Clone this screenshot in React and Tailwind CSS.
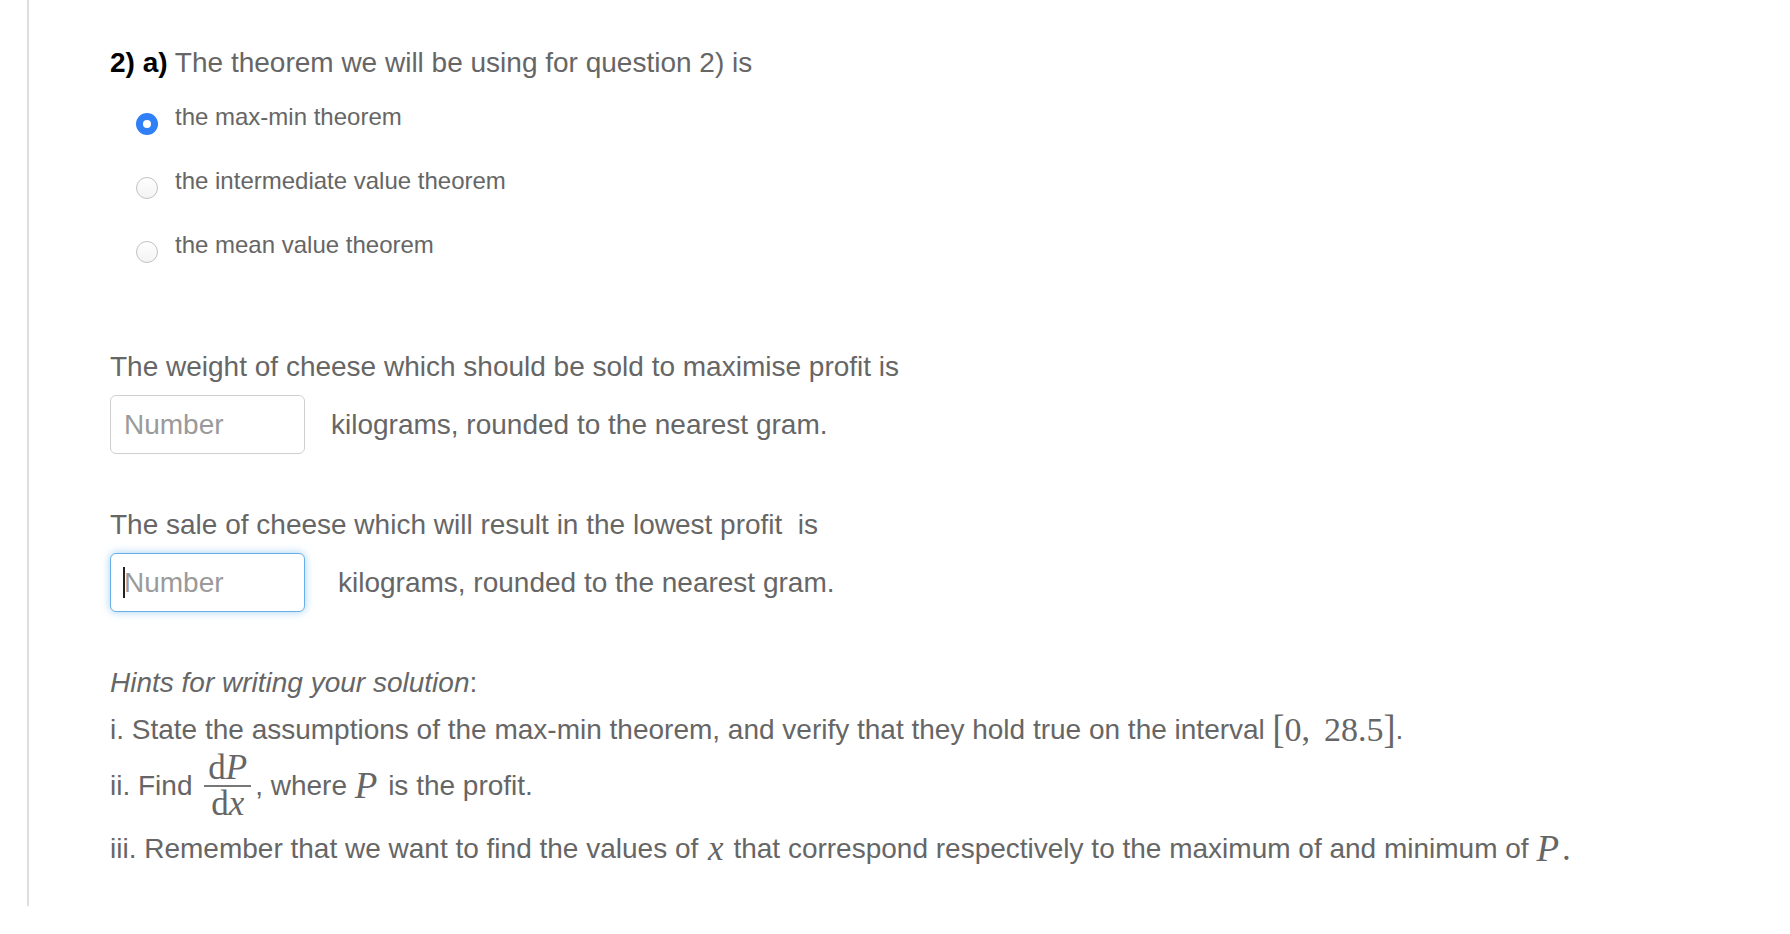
import React from "react";

const sans = { fontFamily: '"Liberation Sans", Arial, Helvetica, sans-serif' };

function Radio({ checked }) {
  if (checked) {
    return (
      <span className="mt-[14px] flex h-[22px] w-[22px] shrink-0 items-center justify-center rounded-full bg-[#2f7ff6]">
        <span className="h-[8px] w-[8px] rounded-full bg-white" />
      </span>
    );
  }
  return (
    <span className="mt-[14px] h-[22px] w-[22px] shrink-0 rounded-full border border-[#c2c2c2] bg-gradient-to-b from-white to-[#f3f3f3]" />
  );
}

function Option({ checked, label }) {
  return (
    <div className="flex h-[64px] items-center pl-[26px]">
      <Radio checked={checked} />
      <span className="ml-[17px] text-[24px] leading-[30px] text-[#666]">{label}</span>
    </div>
  );
}

function NumberBox({ focused }) {
  return (
    <div
      className={
        "relative flex h-[59px] w-[195px] shrink-0 items-center rounded-[6px] bg-white pl-[13px] " +
        (focused
          ? "border-[1.5px] border-[#66afe9] shadow-[0_0_8px_rgba(102,175,233,0.6)]"
          : "border-[1.5px] border-[#cfcfcf]")
      }
    >
      <span className="text-[28px] leading-[32px] text-[#9a9a9a]">Number</span>
      {focused && <span className="absolute left-[12px] top-[13px] h-[31px] w-[2px] bg-[#222]" />}
    </div>
  );
}

const serif = { fontFamily: '"Liberation Serif", "Times New Roman", serif' };

function M({ children, italic, cls }) {
  return (
    <span style={serif} className={"text-[35px] " + (italic ? "italic " : "") + (cls || "")}>
      {children}
    </span>
  );
}

export default function App() {
  return (
    <div style={sans} className="h-[934px] w-full bg-white text-[#666]">
      <div className="ml-[27px] h-[906px] border-l-2 border-[#dedede] pl-[81px] pt-[43px]">
        <div className="text-[28px] leading-[40px]">
          <span className="font-bold text-black">2) a)</span> The theorem we will be using for question 2) is
        </div>

        <div className="mt-[2px]">
          <Option checked label="the max-min theorem" />
          <Option label="the intermediate value theorem" />
          <Option label="the mean value theorem" />
        </div>

        <div className="mt-[70px] text-[28px] leading-[40px]">
          The weight of cheese which should be sold to maximise profit is
        </div>
        <div className="mt-[8px] flex items-center">
          <NumberBox />
          <span className="ml-[26px] text-[28px] leading-[40px]">kilograms, rounded to the nearest gram.</span>
        </div>

        <div className="mt-[51px] text-[28px] leading-[40px]">
          The sale of cheese which will result in the lowest profit&nbsp; is
        </div>
        <div className="mt-[8px] flex items-center">
          <NumberBox focused />
          <span className="ml-[33px] text-[28px] leading-[40px]">kilograms, rounded to the nearest gram.</span>
        </div>

        <div className="mt-[51px] text-[28px] leading-[40px]">
          <span className="italic">Hints for writing your solution</span>:
        </div>
        <div className="mt-[7px] flex items-center text-[28px] leading-[40px]">
          <span className="whitespace-pre">i. State the assumptions of the max-min theorem, and verify that they hold true on the interval </span>
          <span style={serif} className="flex items-center text-[34px] leading-[40px]">
            <span className="inline-block scale-y-[1.12] text-[36px]">[</span>
            <span>0,</span>
            <span className="ml-[14px]">28.5</span>
            <span className="inline-block scale-y-[1.12] text-[36px]">]</span>
          </span>
          <span>.</span>
        </div>

        <div className="flex h-[72px] items-center text-[28px]">
          <span className="whitespace-pre">ii. Find </span>
          <span style={serif} className="mx-[4px] flex flex-col items-center text-[35px]">
            <span className="px-[4px] leading-[34px]">
              d<span className="italic">P</span>
            </span>
            <span className="h-[1.5px] w-full bg-[#777]" />
            <span className="px-[4px] leading-[34px]">
              d<span className="italic">x</span>
            </span>
          </span>
          <span className="whitespace-pre">, where </span>
          <M italic cls="text-[37px] mr-[3px]">P</M>
          <span className="whitespace-pre"> is the profit.</span>
        </div>

        <div className="mt-[7px] flex items-center text-[28px] leading-[40px]">
          <span className="whitespace-pre">iii. Remember that we want to find the values of </span>
          <M italic cls="mx-[2px]">x</M>
          <span className="whitespace-pre"> that correspond respectively to the maximum of and minimum of </span>
          <M italic cls="text-[37px] mr-[3px]">P</M>
          <M>.</M>
        </div>
      </div>
    </div>
  );
}
